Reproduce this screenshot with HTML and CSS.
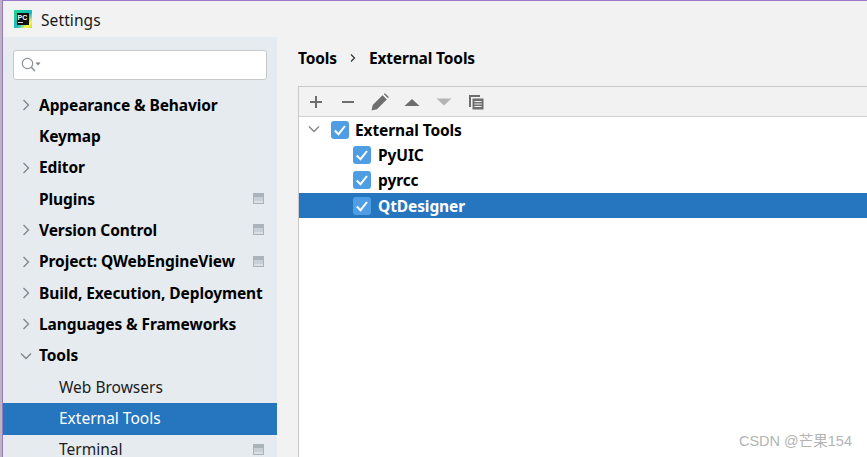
FILE: index.html
```html
<!DOCTYPE html>
<html lang="en">
<head>
<meta charset="utf-8">
<title>Settings</title>
<link rel="stylesheet" href="styles.css">
</head>
<body>
<div class="window">
  <header class="titlebar">
    <svg class="logo" width="18" height="18" viewBox="0 0 18 18">
      <defs>
        <linearGradient id="pc" x1="0" y1="0" x2="1" y2="1">
          <stop offset="0" stop-color="#21d789"/>
          <stop offset="0.55" stop-color="#19b8c9"/>
          <stop offset="0.8" stop-color="#fcf84a"/>
          <stop offset="1" stop-color="#b4e02a"/>
        </linearGradient>
      </defs>
      <rect width="18" height="18" fill="url(#pc)"/>
      <rect x="3" y="3" width="12" height="12" fill="#111"/>
      <rect x="4" y="12" width="5" height="1" fill="#ddd"/>
      <text x="3.6" y="9.6" class="logo-text">PC</text>
    </svg>
    <span class="title">Settings</span>
  </header>
  <div class="main">
    <nav class="sidebar">
      <div class="search">
        <svg width="24" height="18" viewBox="0 0 24 18" fill="none">
          <circle cx="7.5" cy="7.5" r="5.2" stroke="#8c9296" stroke-width="1.2"/>
          <path d="M11.4 11.4 15 15" stroke="#8c9296" stroke-width="1.5"/>
          <path d="M15.5 6.5h5l-2.5 3z" fill="#7a7f83"/>
        </svg>
      </div>
      <ul class="nav">
        <li class="item bold"><svg class="chev" viewBox="0 0 12 12"><path d="M3.5 1 8.5 6l-5 5"/></svg>Appearance &amp; Behavior</li>
        <li class="item bold">Keymap</li>
        <li class="item bold"><svg class="chev" viewBox="0 0 12 12"><path d="M3.5 1 8.5 6l-5 5"/></svg>Editor</li>
        <li class="item bold">Plugins<span class="badge"></span></li>
        <li class="item bold"><svg class="chev" viewBox="0 0 12 12"><path d="M3.5 1 8.5 6l-5 5"/></svg>Version Control<span class="badge"></span></li>
        <li class="item bold"><svg class="chev" viewBox="0 0 12 12"><path d="M3.5 1 8.5 6l-5 5"/></svg>Project: QWebEngineView<span class="badge"></span></li>
        <li class="item bold"><svg class="chev" viewBox="0 0 12 12"><path d="M3.5 1 8.5 6l-5 5"/></svg>Build, Execution, Deployment</li>
        <li class="item bold"><svg class="chev" viewBox="0 0 12 12"><path d="M3.5 1 8.5 6l-5 5"/></svg>Languages &amp; Frameworks</li>
        <li class="item bold"><svg class="chev" viewBox="0 0 12 12"><path d="M1 3.5 6 8.5l5-5"/></svg>Tools</li>
        <li class="item sub">Web Browsers</li>
        <li class="item sub selected">External Tools</li>
        <li class="item sub">Terminal<span class="badge"></span></li>
      </ul>
    </nav>
    <section class="content">
      <div class="crumbs"><span>Tools</span><svg class="crumb-sep" viewBox="0 0 8 10"><path d="M2 1.5 5.5 5 2 8.5"/></svg><span>External Tools</span></div>
      <div class="panel">
        <div class="toolbar">
          <svg class="tool" viewBox="0 0 16 16"><path d="M7 2h2v5h5v2H9v5H7V9H2V7h5z" fill="#6e6e6e"/></svg>
          <svg class="tool" viewBox="0 0 16 16"><path d="M2 7h12v2H2z" fill="#6e6e6e"/></svg>
          <svg class="tool pencil" viewBox="0 0 18 18"><path d="M0.500 17.500l1.200-5.500L11.500 2.200l4.300 4.300L6 16.300zM12.800 1l1.200-.8 3.800 3.800-.8 1.200z" fill="#6e6e6e"/></svg>
          <svg class="tool" viewBox="0 0 16 16"><path d="M0.500 12 8 5l7.500 7z" fill="#6e6e6e"/></svg>
          <svg class="tool" viewBox="0 0 16 16"><path d="M0.500 4.500 8 11.500l7.500-7z" fill="#b4b4b4"/></svg>
          <svg class="tool" viewBox="0 0 16 16"><path d="M1 1h11v2H3v10H1z" fill="#6e6e6e"/><path d="M4.500 4.500h11v11h-11z" fill="#6e6e6e"/><path d="M6.500 7h7v1h-7zM6.500 9.500h7v1h-7zM6.500 12h7v1h-7z" fill="#f2f2f2"/></svg>
        </div>
        <ul class="tree">
          <li class="row level0"><svg class="chev tree-chev" viewBox="0 0 12 12"><path d="M1 3.500 6 8.500l5-5"/></svg><span class="check"><svg viewBox="0 0 18 18"><path d="M3.800 9.500 7.500 13.200 14 5"/></svg></span>External Tools</li>
          <li class="row level1"><span class="check"><svg viewBox="0 0 18 18"><path d="M3.800 9.500 7.500 13.200 14 5"/></svg></span>PyUIC</li>
          <li class="row level1"><span class="check"><svg viewBox="0 0 18 18"><path d="M3.800 9.500 7.500 13.200 14 5"/></svg></span>pyrcc</li>
          <li class="row level1 selected"><span class="check"><svg viewBox="0 0 18 18"><path d="M3.800 9.500 7.500 13.200 14 5"/></svg></span>QtDesigner</li>
        </ul>
      </div>
    </section>
  </div>
  <div class="watermark">CSDN @芒果154</div>
</div>
</body>
</html>
```
FILE: styles.css
```css
* { box-sizing: border-box; }
html, body { margin: 0; height: 100%; overflow: hidden; }
body {
  width: 867px;
  height: 457px;
  background: #b9b6bd;
  font-family: "Noto Sans", "Open Sans", "Liberation Sans", sans-serif;
  color: #000;
}
ul { list-style: none; margin: 0; padding: 0; }
.window {
  position: relative;
  margin-left: 2px;
  height: 457px;
  background: #f2f2f2;
  border-top: 1px solid #9878c4;
  border-left: 1px solid #9878c4;
  display: flex;
  flex-direction: column;
}
.titlebar {
  height: 36px;
  flex: none;
  display: flex;
  align-items: center;
  padding-left: 11px;
  gap: 9px;
}
.logo { display: block; margin-top: -1px; }
.logo-text { font: 700 7px "Liberation Sans", sans-serif; fill: #fff; }
.title { font-size: 15.500px; color: #1a1a1a; letter-spacing: 0.1px; margin-top: 1px; }
.main { flex: 1; display: flex; min-height: 0; }
.sidebar {
  width: 274px;
  flex: none;
  background: #e6ebf0;
  padding-top: 13px;
  overflow: hidden;
}
.search {
  width: 254px;
  height: 30px;
  margin-left: 10px;
  background: #fff;
  border: 1px solid #c6c9cc;
  border-radius: 3px;
  display: flex;
  align-items: center;
  padding-left: 6px;
}
.nav { margin-top: 10px; }
.item {
  height: 31.35px;
  display: flex;
  align-items: center;
  position: relative;
  padding: 0 0 2px 36px;
  font-size: 15.500px;
  white-space: nowrap;
}
.bold { font-weight: 700; letter-spacing: -0.1px; }
.sub { padding-left: 56px; color: #1c1c1c; }
.item.selected { background: #2675bf; color: #fff; }
.chev {
  position: absolute;
  left: 17px;
  top: 9px;
  width: 12px;
  height: 12px;
  fill: none;
  stroke: #7f8487;
  stroke-width: 1.3;
}
.badge {
  position: absolute;
  left: 250px;
  top: 9px;
  width: 11px;
  height: 11px;
  background: linear-gradient(#aab3b8 0 3px, #c9d0d5 3px);
  border: 1px solid #aab3b8;
  box-shadow: inset 0 -2px 0 #dbe0e4;
}
.content { flex: 1; min-width: 0; padding-left: 21px; }
.crumbs {
  height: 49px;
  display: flex;
  align-items: center;
  font-size: 15.500px;
  font-weight: 700;
  letter-spacing: -0.15px;
  gap: 11px;
  padding-bottom: 7px;
}
.crumb-sep {
  width: 8px;
  height: 10px;
  fill: none;
  stroke: #333;
  stroke-width: 1.2;
  margin: 0 1px;
}
.panel {
  height: 371px;
  border-top: 1px solid #c9c9c9;
  border-left: 1px solid #c9c9c9;
  background: #fff;
}
.toolbar {
  height: 30px;
  background: #f2f2f2;
  border-bottom: 1px solid #d1d1d1;
  display: flex;
  align-items: center;
  padding-left: 9px;
  gap: 16px;
}
.tool { width: 16px; height: 16px; flex: none; }
.pencil { width: 18px; height: 18px; margin: 0 -1px; }
.tree { padding-top: 0; }
.row {
  height: 25.3px;
  display: flex;
  align-items: center;
  position: relative;
  font-size: 15.500px;
  font-weight: 700;
  letter-spacing: -0.1px;
  gap: 7px;
}
.level0 { padding-left: 32px; gap: 6px; }
.level1 { padding-left: 54px; }
.row.selected { background: #2675bf; color: #fff; }
.tree-chev { left: 9px; top: 6px; }
.check {
  width: 18px;
  height: 18px;
  flex: none;
  border-radius: 3px;
  background: #4f9ee3;
}
.check svg {
  display: block;
  width: 18px;
  height: 18px;
  fill: none;
  stroke: #fff;
  stroke-width: 2;
}
.watermark {
  position: absolute;
  right: 15px;
  bottom: 7px;
  font-family: "Liberation Sans", "Noto Sans CJK SC", sans-serif;
  font-size: 14.500px;
  color: #b4b4b4;
}
```
